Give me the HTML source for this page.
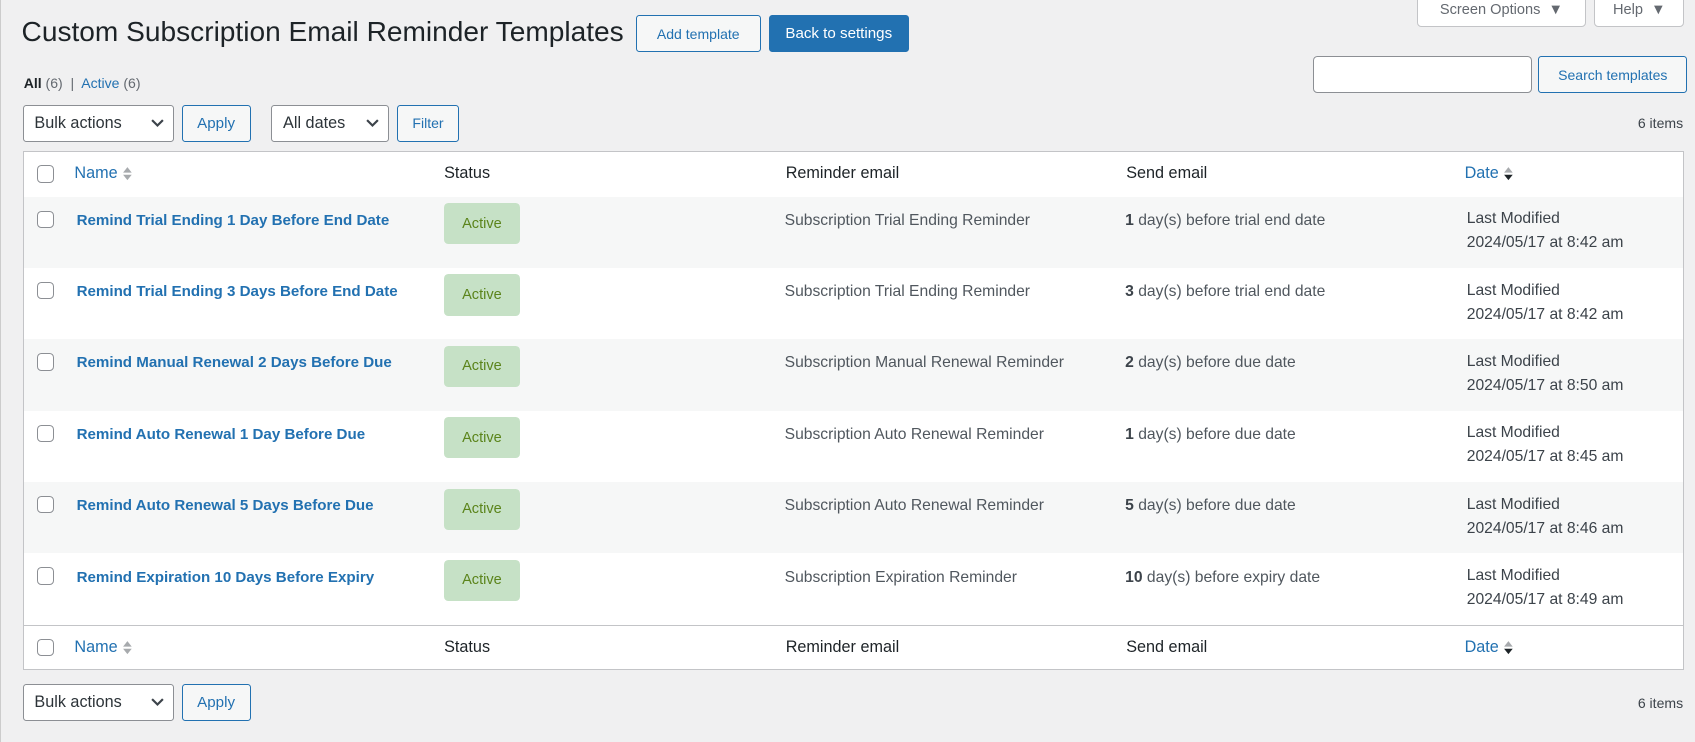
<!DOCTYPE html>
<html><head><meta charset="utf-8">
<style>
html,body{margin:0;padding:0;}
body{background:#f0f0f1;width:1695px;height:741px;overflow:hidden;font-family:"Liberation Sans",sans-serif;color:#3c434a;}
#w{zoom:1.081;position:relative;width:1568px;height:686px;border-left:1px solid #ccc;box-sizing:border-box;}
.a{position:absolute;}
.btn{position:absolute;box-sizing:border-box;border:1px solid #2271b1;border-radius:3px;background:#f6f7f7;color:#2271b1;font-size:13px;display:flex;align-items:center;justify-content:center;}
.sel{position:absolute;box-sizing:border-box;border:1px solid #8c8f94;border-radius:3px;background:#fff;color:#2c3338;font-size:15px;padding-left:10px;display:flex;align-items:center;}
.sel svg{position:absolute;right:8px;top:50%;margin-top:-4px;}
.tab{position:absolute;left:20px;top:140px;width:1537px;height:480px;background:#fff;border:1px solid #c3c4c7;box-sizing:border-box;}
.row{position:absolute;left:0;width:100%;height:66px;}
.cb{position:absolute;left:12px;width:16px;height:16px;border:1px solid #8c8f94;border-radius:4px;background:#fff;box-sizing:border-box;}
.hd{position:absolute;font-size:15px;color:#1d2327;}
.lk{color:#2271b1;}
.nm{position:absolute;left:49px;top:14px;font-size:14px;font-weight:bold;color:#2271b1;}
.st{position:absolute;left:389px;top:6px;width:70px;height:38px;background:#c6e1c6;border-radius:4px;color:#5b841b;font-size:13.5px;display:flex;align-items:center;justify-content:center;}
.re{position:absolute;left:704px;top:14px;font-size:14.5px;color:#50575e;}
.se{position:absolute;left:1019px;top:14px;font-size:14.5px;color:#50575e;}
.se b{color:#3c434a;}
.dt{position:absolute;left:1335px;top:14px;font-size:14.5px;color:#3c434a;line-height:22px;margin-top:-4px;}
.sort{display:inline-block;vertical-align:middle;margin-left:4px;}
</style></head><body><div id="w">
<div class="a" style="left:19px;top:15px;font-size:26px;color:#1d2327;">Custom Subscription Email Reminder Templates</div>
<div class="btn" style="left:587px;top:14px;width:116px;height:34px;">Add template</div>
<div class="btn" style="left:710px;top:14px;width:130px;height:34px;background:#2271b1;color:#fff;font-size:14px;">Back to settings</div>
<div class="btn" style="left:1310px;top:-10px;width:156px;height:35px;border-color:#c3c4c7;background:#fff;color:#646970;font-size:13.5px;border-radius:0 0 4px 4px;padding-top:4px;">Screen Options&nbsp;&nbsp;▼</div>
<div class="btn" style="left:1474px;top:-10px;width:83px;height:35px;border-color:#c3c4c7;background:#fff;color:#646970;font-size:13.5px;border-radius:0 0 4px 4px;padding-top:4px;">Help&nbsp;&nbsp;▼</div>
<div class="a" style="left:21px;top:69px;font-size:13px;color:#646970;"><b style="color:#1d2327">All</b> (6) &nbsp;|&nbsp; <span class="lk">Active</span> (6)</div>
<div class="a" style="left:1214px;top:52px;width:202px;height:34px;box-sizing:border-box;border:1px solid #8c8f94;border-radius:4px;background:#fff;"></div>
<div class="btn" style="left:1422px;top:52px;width:138px;height:34px;">Search templates</div>
<div class="sel" style="left:20px;top:97px;width:140px;height:34px;">Bulk actions<svg width="12" height="8"><path d="M1 1l5 5 5-5" stroke="#3c434a" stroke-width="2" fill="none"/></svg></div>
<div class="btn" style="left:167px;top:97px;width:64px;height:34px;font-size:14px;">Apply</div>
<div class="sel" style="left:250px;top:97px;width:109px;height:34px;">All dates<svg width="12" height="8"><path d="M1 1l5 5 5-5" stroke="#3c434a" stroke-width="2" fill="none"/></svg></div>
<div class="btn" style="left:366px;top:97px;width:58px;height:34px;">Filter</div>
<div class="a" style="right:11px;top:106px;font-size:13px;">6 items</div>
<div class="tab">
 <div class="row" style="top:0;height:42px;border-bottom:1px solid #c3c4c7;box-sizing:border-box;">
  <div class="cb" style="top:12px;"></div>
  <div class="hd lk" style="left:47px;top:11px;">Name<svg class="sort" width="10" height="16"><path d="M1 7l4-5 4 5z" fill="#a7aaad"/><path d="M1 9l4 5 4-5z" fill="#a7aaad"/></svg></div>
  <div class="hd" style="left:389px;top:11px;">Status</div>
  <div class="hd" style="left:705px;top:11px;">Reminder email</div>
  <div class="hd" style="left:1020px;top:11px;">Send email</div>
  <div class="hd lk" style="left:1333px;top:11px;">Date<svg class="sort" width="10" height="16"><path d="M1 7l4-5 4 5z" fill="#a7aaad"/><path d="M1 9l4 5 4-5z" fill="#1d2327"/></svg></div>
 </div>
 <div class="row" style="top:41px;background:#f6f7f7;"><div class="cb" style="top:13px;"></div><div class="nm">Remind Trial Ending 1 Day Before End Date</div><div class="st">Active</div><div class="re">Subscription Trial Ending Reminder</div><div class="se"><b>1</b> day(s) before trial end date</div><div class="dt">Last Modified<br>2024/05/17 at 8:42 am</div></div>
 <div class="row" style="top:107px;"><div class="cb" style="top:13px;"></div><div class="nm">Remind Trial Ending 3 Days Before End Date</div><div class="st">Active</div><div class="re">Subscription Trial Ending Reminder</div><div class="se"><b>3</b> day(s) before trial end date</div><div class="dt">Last Modified<br>2024/05/17 at 8:42 am</div></div>
 <div class="row" style="top:173px;background:#f6f7f7;"><div class="cb" style="top:13px;"></div><div class="nm">Remind Manual Renewal 2 Days Before Due</div><div class="st">Active</div><div class="re">Subscription Manual Renewal Reminder</div><div class="se"><b>2</b> day(s) before due date</div><div class="dt">Last Modified<br>2024/05/17 at 8:50 am</div></div>
 <div class="row" style="top:239px;"><div class="cb" style="top:13px;"></div><div class="nm">Remind Auto Renewal 1 Day Before Due</div><div class="st">Active</div><div class="re">Subscription Auto Renewal Reminder</div><div class="se"><b>1</b> day(s) before due date</div><div class="dt">Last Modified<br>2024/05/17 at 8:45 am</div></div>
 <div class="row" style="top:305px;background:#f6f7f7;"><div class="cb" style="top:13px;"></div><div class="nm">Remind Auto Renewal 5 Days Before Due</div><div class="st">Active</div><div class="re">Subscription Auto Renewal Reminder</div><div class="se"><b>5</b> day(s) before due date</div><div class="dt">Last Modified<br>2024/05/17 at 8:46 am</div></div>
 <div class="row" style="top:371px;"><div class="cb" style="top:13px;"></div><div class="nm">Remind Expiration 10 Days Before Expiry</div><div class="st">Active</div><div class="re">Subscription Expiration Reminder</div><div class="se"><b>10</b> day(s) before expiry date</div><div class="dt">Last Modified<br>2024/05/17 at 8:49 am</div></div>
 <div class="row" style="top:437px;height:42px;border-top:1px solid #c3c4c7;box-sizing:border-box;">
  <div class="cb" style="top:12px;"></div>
  <div class="hd lk" style="left:47px;top:11px;">Name<svg class="sort" width="10" height="16"><path d="M1 7l4-5 4 5z" fill="#a7aaad"/><path d="M1 9l4 5 4-5z" fill="#a7aaad"/></svg></div>
  <div class="hd" style="left:389px;top:11px;">Status</div>
  <div class="hd" style="left:705px;top:11px;">Reminder email</div>
  <div class="hd" style="left:1020px;top:11px;">Send email</div>
  <div class="hd lk" style="left:1333px;top:11px;">Date<svg class="sort" width="10" height="16"><path d="M1 7l4-5 4 5z" fill="#a7aaad"/><path d="M1 9l4 5 4-5z" fill="#1d2327"/></svg></div>
 </div>
</div>
<div class="sel" style="left:20px;top:633px;width:140px;height:34px;">Bulk actions<svg width="12" height="8"><path d="M1 1l5 5 5-5" stroke="#3c434a" stroke-width="2" fill="none"/></svg></div>
<div class="btn" style="left:167px;top:633px;width:64px;height:34px;font-size:14px;">Apply</div>
<div class="a" style="right:11px;top:643px;font-size:13px;">6 items</div>
</div></body></html>
